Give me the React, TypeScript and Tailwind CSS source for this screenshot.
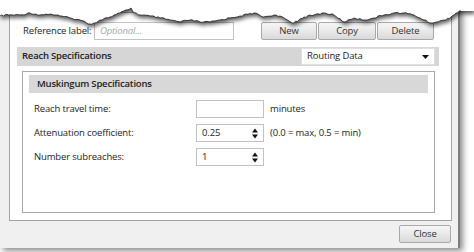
import React from 'react';

// torn paper edge across the top of the screenshot
const keyPoints: [number, number][] = [
  [0, 16], [5, 15], [20, 15], [30, 13], [40, 15], [50, 14], [60, 16], [70, 18], [80, 20],
  [90, 24], [95, 23], [100, 20], [110, 17], [120, 13], [127, 10], [131, 8], [133, 12],
  [140, 15], [150, 16], [160, 18], [170, 20], [180, 22], [190, 20], [200, 22], [210, 22],
  [220, 20], [230, 18], [240, 16], [254, 13], [264, 17], [274, 15], [284, 18], [292, 23],
  [299, 20], [304, 17], [314, 15], [324, 13], [334, 15], [344, 22], [354, 18], [364, 20],
  [374, 18], [384, 15], [394, 13], [404, 13], [414, 15], [424, 20], [431, 23], [437, 22],
  [444, 20], [451, 17], [456, 13], [461, 11],
];

const jitter = (i: number) => {
  const v = Math.sin(i * 12.9898) * 43758.5453;
  return (v - Math.floor(v) - 0.5) * 1.6;
};

const buildTear = () => {
  const pts: [number, number][] = [];
  let n = 0;
  for (let k = 0; k < keyPoints.length - 1; k++) {
    const [x0, y0] = keyPoints[k];
    const [x1, y1] = keyPoints[k + 1];
    const steps = Math.max(1, Math.round((x1 - x0) / 2));
    for (let s = 0; s < steps; s++) {
      const t = s / steps;
      const x = x0 + (x1 - x0) * t;
      const y = y0 + (y1 - y0) * t + (s === 0 ? 0 : jitter(n++));
      pts.push([x, y]);
    }
  }
  pts.push(keyPoints[keyPoints.length - 1]);
  const line = pts.map(([x, y], i) => `${i ? 'L' : 'M'}${x.toFixed(1)},${y.toFixed(1)}`).join(' ');
  const shape = `M0,0 L474,0 L474,11 ${pts
    .slice()
    .reverse()
    .map(([x, y]) => `L${x.toFixed(1)},${y.toFixed(1)}`)
    .join(' ')} Z`;
  return { line, shape };
};

const tear = buildTear();

const TornEdge = () => (
  <svg className="absolute left-0 top-0" width="474" height="40" viewBox="0 0 474 40">
    <defs>
      <filter id="tearBlur" x="-5%" y="-50%" width="110%" height="200%">
        <feGaussianBlur stdDeviation="2" />
      </filter>
    </defs>
    <path d={tear.shape} fill="#000" opacity="0.65" transform="translate(1,3)" filter="url(#tearBlur)" />
    <path d={tear.shape} fill="#fff" />
    <path d={tear.line} fill="none" stroke="#2e2e2e" strokeWidth="0.9" />
  </svg>
);

const Button = ({ label, width }: { label: string; width: string }) => (
  <div
    className={`${width} h-[18px] flex items-center justify-center rounded-[2px] border border-[#a9a9a9] bg-linear-to-b from-[#f6f6f6] via-[#e9e9e9] to-[#d9d9d9] text-[#333]`}
  >
    {label}
  </div>
);

const Spinner = () => (
  <svg width="6" height="11" viewBox="0 0 6 11">
    <polygon points="0,4.5 3,0.5 6,4.5" fill="#111" />
    <polygon points="0,6.5 6,6.5 3,10.5" fill="#111" />
  </svg>
);

const fieldRows = [
  { label: 'Reach travel time:', value: '', spin: false, note: 'minutes' },
  { label: 'Attenuation coefficient:', value: '0.25', spin: true, note: '(0.0 = max, 0.5 = min)' },
  { label: 'Number subreaches:', value: '1', spin: true, note: '' },
];

export default function App() {
  return (
    <div
      className="relative w-[474px] h-[252px] bg-white overflow-hidden text-[9.5px] text-[#1e1e1e] whitespace-nowrap tracking-[-0.15px]"
      style={{ fontFamily: '"Open Sans", "Noto Sans", sans-serif' }}
    >
      <div className="w-[460px] h-[248px] bg-[#f0f0f0] border-r-2 border-[#7d7d7d] shadow-[3px_3px_6px_rgba(0,0,0,0.45)] pl-[9px] pt-[12px] flex flex-col">
        <div className="w-[443px] h-[209px] bg-white border border-[#a3a3a3] flex flex-col">
          <div className="mt-[9px] h-[18px] pl-[13px] flex items-center">
            <span className="w-[71px]">Reference label:</span>
            <div className="w-[140px] h-[18px] border border-[#c2c2c2] flex items-center pl-[5px] italic text-[#a6a6a6]">
              Optional...
            </div>
            <div className="ml-[27px] flex gap-[1px]">
              <Button label="New" width="w-[56px]" />
              <Button label="Copy" width="w-[58px]" />
              <Button label="Delete" width="w-[57px]" />
            </div>
          </div>

          <div className="mt-[7px] ml-[7px] w-[422px] h-[19px] bg-[#d6d6d6] flex items-center justify-between pl-[5px] pr-[4px]">
            <span className="font-semibold text-[#222] tracking-[-0.2px]">Reach Specifications</span>
            <div className="w-[134px] h-[17px] bg-white border border-[#e0e0e0] flex items-center justify-between pl-[5px] pr-[5px]">
              <span>Routing Data</span>
              <svg width="7" height="4" viewBox="0 0 7 4">
                <polygon points="0,0 7,0 3.5,4" fill="#111" />
              </svg>
            </div>
          </div>

          <div className="mt-[5px] ml-[12px] w-[413px] h-[142px] border border-[#a9a9a9] flex flex-col">
            <div className="mt-[3px] mx-[6px] h-[18px] bg-[#d8d8d8] flex items-center pl-[8px] font-semibold text-[#222] tracking-[-0.2px]">
              Muskingum Specifications
            </div>
            <div className="mt-[7px] flex flex-col gap-[6px]">
              {fieldRows.map((row) => (
                <div key={row.label} className="h-[18px] pl-[11px] flex items-center">
                  <span className="w-[162px]">{row.label}</span>
                  <div className="w-[68px] h-[18px] border border-[#c2c2c2] flex items-center justify-between pl-[5px] pr-[5px]">
                    <span>{row.value}</span>
                    {row.spin && <Spinner />}
                  </div>
                  {row.note && <span className="ml-[6px]">{row.note}</span>}
                </div>
              ))}
            </div>
          </div>
        </div>

        <div className="mt-[4px] pr-[7px] flex justify-end">
          <Button label="Close" width="w-[52px]" />
        </div>
      </div>
      <TornEdge />
    </div>
  );
}
